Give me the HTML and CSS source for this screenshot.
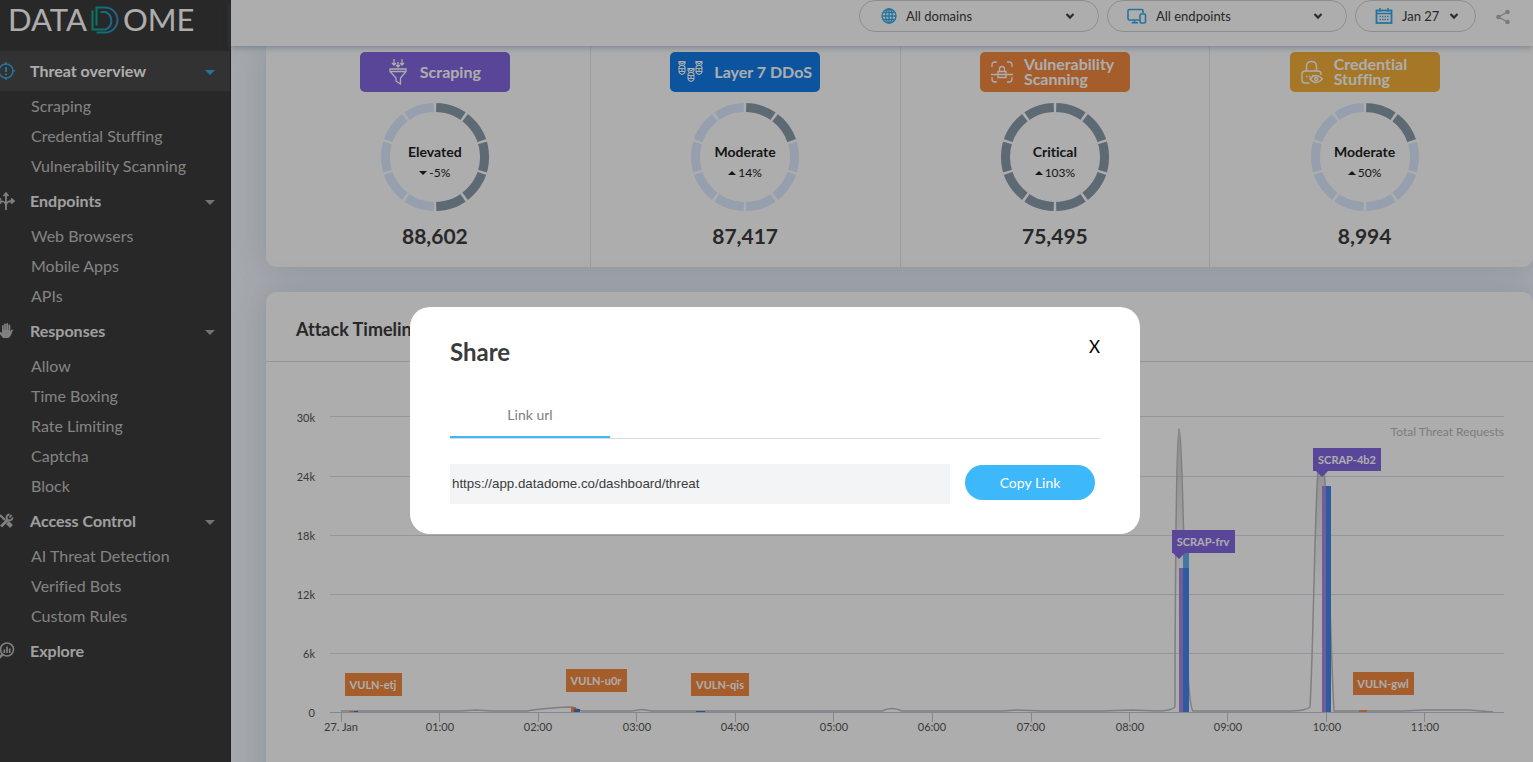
FILE: index.html
```html
<!DOCTYPE html>
<html lang="en">
<head>
<meta charset="utf-8">
<title>DataDome – Threat overview</title>
<link rel="stylesheet" href="styles.css">
</head>
<body>
<svg class="defs" aria-hidden="true">
  <defs>
    <g id="ring-base"><circle cx="55" cy="55" r="49.5" pathLength="100" fill="none" stroke="#deebff" stroke-width="9"/></g>
    <g id="ring-gaps"><circle cx="55" cy="55" r="49.5" pathLength="100" fill="none" stroke="#fff" stroke-width="10" stroke-dasharray="0.8 9.2" stroke-dashoffset="0.4"/></g>
    <symbol id="chevron" viewBox="0 0 10 8"><path d="M1.500 2 5 5.600 8.500 2" fill="none" stroke="#444" stroke-width="2.200"/></symbol>
    <symbol id="bomb" viewBox="0 0 8 14"><path d="M1 .5h6v2L5.500 4.500h-3L1 2.500zM1 .5l3 2.500 3-2.500M1 6l1.500-1.500h3L7 6v4.500q0 2-3 3-3-1-3-3zM1 7.500h6M1 10.500h6M4 7.500v3" fill="none" stroke="#fff" stroke-width="1.100"/></symbol>
  </defs>
</svg>
<div class="app">
  <aside class="sidebar">
    <div class="logo" aria-label="DataDome">
      <span>DATA</span>
      <svg width="28" height="28" viewBox="0 0 28 28" fill="none" stroke-width="2">
        <defs><linearGradient id="lg" gradientUnits="userSpaceOnUse" x1="0" x2="28" y1="0" y2="0"><stop offset=".2" stop-color="#06b09c"/><stop offset=".75" stop-color="#2f96c8"/></linearGradient></defs>
        <path d="M1.500 4.500v19H14.500a9.500 9.500 0 0 0 0-17.500H9.500" stroke="url(#lg)"/>
        <path d="M5.500 19.500V1.500H14a12.500 12.500 0 0 1 0 25H5.500" stroke="url(#lg)"/>
      </svg>
      <span>OME</span>
    </div>
    <nav>
      <a class="section active" href="#"><svg class="nav-icon" viewBox="0 0 18 18" fill="none" stroke="currentColor" stroke-width="1.500"><circle cx="9" cy="9" r="7"/><path d="M9 0v3M9 15v3M0 9h3M15 9h3"/><path d="M9 5v5M9 11.500v1.800" stroke-width="2"/></svg><span>Threat overview</span><i class="caret"></i></a>
      <a class="item" href="#">Scraping</a>
      <a class="item" href="#">Credential Stuffing</a>
      <a class="item" href="#">Vulnerability Scanning</a>
      <a class="section" href="#"><svg class="nav-icon" viewBox="0 0 18 18" fill="none" stroke="currentColor" stroke-width="1.800"><path d="M9 18V2M6.500 4 9 1.200 11.500 4M9 14c0-4-2-5-7-5M9 14c0-4 2-5 7-5M4 6.500 1.200 9 4 11.500M14 6.500 16.800 9 14 11.500"/></svg><span>Endpoints</span><i class="caret"></i></a>
      <a class="item" href="#">Web Browsers</a>
      <a class="item" href="#">Mobile Apps</a>
      <a class="item" href="#">APIs</a>
      <a class="section" href="#"><svg class="nav-icon" viewBox="0 0 18 18" fill="currentColor"><path d="M6 16 2.500 11.500q-1-2 .8-1.800L5 11V4q0-1 .8-1t.9 1v4h.4V2.500q0-1 .9-1t.9 1V8h.4V2q0-1 .9-1t.9 1v6h.4V3.500q0-1 .9-1t.9 1v6l1.200-1.700q1-.8 1.500.2L14 13q-1 3-3 3z"/></svg><span>Responses</span><i class="caret"></i></a>
      <a class="item" href="#">Allow</a>
      <a class="item" href="#">Time Boxing</a>
      <a class="item" href="#">Rate Limiting</a>
      <a class="item" href="#">Captcha</a>
      <a class="item" href="#">Block</a>
      <a class="section" href="#"><svg class="nav-icon" viewBox="0 0 18 18" fill="none" stroke="currentColor"><path d="m3 3 5 5" stroke-width="2.200"/><path d="m10.500 10.500 4 4" stroke-width="4"/><path d="m4 14.500 7-7" stroke-width="3"/><path d="M14.500 3 12.500 5.500M15.500 5.500A3 3 0 1 1 12.500 2.500" stroke-width="1.900"/></svg><span>Access Control</span><i class="caret"></i></a>
      <a class="item" href="#">AI Threat Detection</a>
      <a class="item" href="#">Verified Bots</a>
      <a class="item" href="#">Custom Rules</a>
      <a class="section" href="#"><svg class="nav-icon" viewBox="0 0 18 18" fill="none" stroke="currentColor" stroke-width="1.600"><circle cx="10" cy="7.500" r="6.500"/><path d="m5.500 12.500-4 4" stroke-width="2.500"/><path d="M7.300 7.500V11M10 4.500V11M12.700 6.500V11" stroke-width="1.700"/></svg><span>Explore</span></a>
    </nav>
  </aside>

  <main class="main">
    <header class="topbar">
      <label class="pill wide">
        <svg width="16" height="16" viewBox="0 0 16 16" fill="none" stroke="#39a9e6" stroke-width="1.300"><circle cx="8" cy="8" r="7"/><ellipse cx="8" cy="8" rx="3.300" ry="7"/><path d="M8 1v14M1 8h14M2 4.500h12M2 11.500h12"/></svg>
        <select aria-label="Domains"><option>All domains</option></select>
        <svg width="10" height="8"><use href="#chevron"/></svg>
      </label>
      <label class="pill wide endpoints">
        <svg width="20" height="16" viewBox="0 0 20 16" fill="none" stroke="#39a9e6" stroke-width="1.600"><path d="M12 12H2.500q-1.500 0-1.500-1.500V3q0-1.500 1.500-1.500h12Q16 1.500 16 3v2M7.500 12v2.800M4.500 14.800H11"/><rect x="13" y="6" width="5.500" height="9" rx="1.200"/></svg>
        <select aria-label="Endpoints"><option>All endpoints</option></select>
        <svg width="10" height="8"><use href="#chevron"/></svg>
      </label>
      <button class="pill date" type="button">
        <svg width="18" height="16" viewBox="0 0 18 16" fill="none" stroke="#39a9e6"><rect x="1.500" y="2.500" width="15" height="12.500" stroke-width="1.800"/><path d="M2 5.500h14M5 0v4M13 0v4" stroke-width="1.400"/><path d="M4.500 8.500h9M4.500 11.500h9" stroke-width="1.500" stroke-dasharray="1.500 1"/></svg>
        <span>Jan 27</span>
        <svg width="10" height="8"><use href="#chevron"/></svg>
      </button>
      <button class="share-btn" type="button" aria-label="Share">
        <svg width="14" height="16" viewBox="0 0 14 16"><path d="M11.500 3 2.500 8l9 5" fill="none" stroke="#b4b5bd" stroke-width="1.300"/><g fill="#b4b5bd"><circle cx="11.500" cy="3" r="2.300"/><circle cx="2.500" cy="8" r="2.300"/><circle cx="11.500" cy="13" r="2.300"/></g></svg>
      </button>
    </header>

    <div class="content">
      <section class="card threats">
        <article class="threat">
          <div class="badge purple"><svg width="18" height="26" viewBox="0 0 18 26" fill="none" stroke="#fff" stroke-width="1.300"><path d="M1 10h16v2.500L11.500 19v6L7 22v-3L1 12.500zM2 12.500h14M5 0v5.500M3 4l2 2 2-2M13 0v5.500M11 4l2 2 2-2M9 3v5M7.200 6 9 8l1.800-2"/></svg><span>Scraping</span></div>
          <div class="gauge"><svg class="ring" viewBox="0 0 110 110"><g transform="rotate(-90 55 55)"><use href="#ring-base"/><circle cx="55" cy="55" r="49.500" pathLength="100" fill="none" stroke="#8a9cac" stroke-width="9" stroke-dasharray="50 50"/><use href="#ring-gaps"/></g></svg><div class="level"><strong>Elevated</strong><span><i class="tri down"></i>-5%</span></div></div>
          <p class="count">88,602</p>
        </article>
        <article class="threat">
          <div class="badge blue"><svg width="26" height="22" viewBox="0 0 26 22"><use href="#bomb" x="0" y="0" width="8" height="14"/><use href="#bomb" x="9" y="7" width="8" height="14"/><use href="#bomb" x="17" y="0" width="8" height="14"/></svg><span>Layer 7 DDoS</span></div>
          <div class="gauge"><svg class="ring" viewBox="0 0 110 110"><g transform="rotate(-90 55 55)"><use href="#ring-base"/><circle cx="55" cy="55" r="49.500" pathLength="100" fill="none" stroke="#8a9cac" stroke-width="9" stroke-dasharray="20 80"/><use href="#ring-gaps"/></g></svg><div class="level"><strong>Moderate</strong><span><i class="tri up"></i>14%</span></div></div>
          <p class="count">87,417</p>
        </article>
        <article class="threat">
          <div class="badge orange two"><svg width="22" height="22" viewBox="0 0 22 22" fill="none" stroke="#fff" stroke-width="1.300"><path d="M1 6V4q0-3 3-3h2M16 1h2q3 0 3 3v2M1 16v2q0 3 3 3h2M16 21h2q3 0 3-3v-2M0 13.500h22M7 10.500h8v6H7zM8.500 10.500v-2.500Q8.500 5.500 11 5.500T13.500 8v2.500"/></svg><span>Vulnerability Scanning</span></div>
          <div class="gauge"><svg class="ring" viewBox="0 0 110 110"><g transform="rotate(-90 55 55)"><use href="#ring-base"/><circle cx="55" cy="55" r="49.500" pathLength="100" fill="none" stroke="#8a9cac" stroke-width="9"/><use href="#ring-gaps"/></g></svg><div class="level"><strong>Critical</strong><span><i class="tri up"></i>103%</span></div></div>
          <p class="count">75,495</p>
        </article>
        <article class="threat">
          <div class="badge yellow two"><svg width="22" height="24" viewBox="0 0 22 24" fill="none" stroke="#fff" stroke-width="1.400"><path d="M8.500 23H4q-3 0-3-3v-6q0-3 3-3h13q3 0 3 3v1M5.500 11V6.500q0-5 5-5t5 5V11M9 19q6-7 12.500 0-6.500 7-12.500 0z"/><circle cx="15.200" cy="19" r="1.500"/><path d="M5 16.500h1.500M8 16.500h1.500M11 15.500h1.500"/></svg><span>Credential Stuffing</span></div>
          <div class="gauge"><svg class="ring" viewBox="0 0 110 110"><g transform="rotate(-90 55 55)"><use href="#ring-base"/><circle cx="55" cy="55" r="49.500" pathLength="100" fill="none" stroke="#8a9cac" stroke-width="9" stroke-dasharray="20 80"/><use href="#ring-gaps"/></g></svg><div class="level"><strong>Moderate</strong><span><i class="tri up"></i>50%</span></div></div>
          <p class="count">8,994</p>
        </article>
      </section>

      <section class="card">
        <h2 class="card-title">Attack Timeline</h2>
        <svg class="chart" viewBox="266 362 1267 430" role="img" aria-label="Attack timeline">
          <defs><linearGradient id="fade" x1="0" x2="0" y1="0" y2="1"><stop offset="0" stop-color="#888" stop-opacity=".4"/><stop offset=".6" stop-color="#888" stop-opacity="0"/></linearGradient></defs>
          <path class="grid" d="M330 416.500h1174M330 476.500h1174M330 535.500h1174M330 594.500h1174M330 653.500h1174"/>
          <g class="y-labels"><text x="315" y="422">30k</text><text x="315" y="481">24k</text><text x="315" y="540">18k</text><text x="315" y="599">12k</text><text x="315" y="658">6k</text><text x="315" y="717">0</text></g>
          <text class="series" x="1504" y="436">Total Threat Requests</text>
          <path fill="url(#fade)" d="M1171 707C1175 640 1176 429 1179 429S1183 660 1193 711ZM1310 708C1314 640 1316 450 1321 450S1330 640 1334 711Z"/>
          <path class="line" d="M341 711h120l15-1 15 1h36C537 709 560 707 572 707L582 711h50l10-1.500 10 1.500h230q10-5 20 0h100l15-1 25 1h60l30-1 25 1q14 0 18-4C1175 640 1176 429 1179 429C1182 429 1184 570 1187 650Q1189 706 1193 711h95q18 0 22-4C1314 640 1315 450 1321 450C1327 450 1330 640 1334 711h70l20-1 45 0 24 2"/>
          <g>
            <path fill="#f28d4d" d="M349 711h5v1h-5zM571 707h5v5h-5zM1359 710h8v2h-8z"/>
            <path fill="#3d7ac8" d="M354 711h4v1h-4zM574 709h6v3h-6zM696 711h9v1h-9z"/>
            <path fill="#a78be2" d="M1179 568h4v144h-4zM1322 486h4v226h-4z"/>
            <path fill="#62aff0" d="M1183 545h6v23h-6z"/>
            <path fill="#4587ea" d="M1183 568h6v144h-6zM1326 486h5v226h-5z"/>
          </g>
          <path class="axis" d="M330 712.500h1174M341.500 713v9M439.500 713v9M538.500 713v9M636.500 713v9M735.500 713v9M833.500 713v9M932.500 713v9M1031.500 713v9M1129.500 713v9M1227.500 713v9M1326.500 713v9M1424.500 713v9"/>
          <g class="x-labels"><text x="341" y="731">27. Jan</text><text x="440" y="731">01:00</text><text x="538" y="731">02:00</text><text x="637" y="731">03:00</text><text x="735" y="731">04:00</text><text x="834" y="731">05:00</text><text x="932" y="731">06:00</text><text x="1031" y="731">07:00</text><text x="1130" y="731">08:00</text><text x="1228" y="731">09:00</text><text x="1327" y="731">10:00</text><text x="1425" y="731">11:00</text></g>
          <path fill="#f48a42" d="M345 673h57v23h-57zM566 669h61v23h-61zM691 673h58v23h-58zM1353 672h61v23h-61z"/>
          <path fill="#8467e1" d="M1172 530h63v23h-50l-6 6-6-6h-1zM1313 448h68v23h-53l-6 6-6-6h-3z"/>
          <g class="flags"><text x="373" y="689">VULN-etj</text><text x="596" y="685">VULN-u0r</text><text x="720" y="689">VULN-qis</text><text x="1383" y="688">VULN-gwl</text><text x="1203" y="546">SCRAP-frv</text><text x="1347" y="464">SCRAP-4b2</text></g>
        </svg>
      </section>
    </div>
  </main>
</div>

<div class="overlay">
  <div class="modal" role="dialog" aria-modal="true" aria-labelledby="share-title">
    <div class="modal-head">
      <h1 id="share-title">Share</h1>
      <button class="close" type="button">X</button>
    </div>
    <div class="tabs" role="tablist"><button class="tab" type="button" role="tab" aria-selected="true">Link url</button></div>
    <div class="link-row">
      <input type="text" aria-label="Link url" value="https://app.datadome.co/dashboard/threat">
      <button class="copy" type="button">Copy Link</button>
    </div>
  </div>
</div>
</body>
</html>
```
FILE: styles.css
```css
* { box-sizing: border-box; }
body {
  margin: 0;
  height: 100vh;
  overflow: hidden;
  background: #f3f8ff;
  color: #3b3b3b;
  font-family: Lato, sans-serif;
  font-variant-ligatures: none;
}
button, select { font: inherit; color: inherit; }
button { cursor: pointer; }
.defs { position: absolute; width: 0; height: 0; }
.app { display: flex; height: 100%; }

/* Sidebar */
.sidebar {
  flex: 0 0 231px;
  background: #3b3b3b;
  border-right: 1px solid #2e2e2e;
  overflow: hidden;
}
.logo {
  display: flex;
  align-items: center;
  gap: 4px;
  height: 51px;
  padding: 0 0 12px 8px;
  color: #fff;
  font-size: 31px;
  line-height: 36px;
}
.logo span { padding-bottom: 2px; }
.section, .item {
  display: flex;
  align-items: center;
  text-decoration: none;
}
.section {
  height: 40px;
  padding-right: 15px;
  color: #ececec;
  font-size: 16px;
  font-weight: 700;
}
.section span { flex: 1; padding-bottom: 2px; }
.section.active { background: #4b4b4b; color: #fff; }
.nav-icon {
  flex: none;
  width: 18px;
  height: 18px;
  margin: 0 15px 0 -3px;
  color: #bdbdbd;
}
.item {
  height: 30px;
  padding: 0 0 2px 31px;
  color: #c2c2c2;
  font-size: 16px;
}
.caret {
  margin-top: 2px;
  border: 5px solid transparent;
  border-top-color: #aaa;
  border-bottom: 0;
}
.active .nav-icon { color: #39a9e6; }
.active .caret { border-top-color: #39a9e6; }

/* Top bar */
.main {
  flex: 1;
  min-width: 0;
  display: flex;
  flex-direction: column;
}
.topbar {
  position: relative;
  z-index: 1;
  flex: none;
  display: flex;
  align-items: flex-start;
  justify-content: flex-end;
  gap: 8px;
  height: 46px;
  padding-right: 23px;
  background: #fff;
  box-shadow: 0 2px 6px rgba(120, 145, 175, .5);
}
.pill {
  display: flex;
  align-items: center;
  height: 32px;
  padding: 0 23px 0 21px;
  border: 1px solid #d2d2d6;
  border-radius: 16px;
  background: #fff;
  font-size: 13px;
}
.pill > :nth-child(2) { flex: 1; margin-left: 9px; text-align: left; }
.wide { width: 240px; }
.endpoints { padding-left: 19px; }
.date { width: 121px; padding: 0 16px 0 19px; }
.pill select {
  appearance: none;
  min-width: 0;
  padding: 0;
  border: 0;
  background: none;
}
.share-btn {
  display: flex;
  align-items: center;
  height: 34px;
  margin-left: 12px;
  padding: 0;
  border: 0;
  background: none;
}

/* Cards */
.content {
  flex: 1;
  min-height: 0;
  display: flex;
  flex-direction: column;
  gap: 25px;
  padding-left: 35px;
}
.card {
  flex: none;
  border-radius: 10px;
  background: #fff;
  box-shadow: 0 0 30px rgba(140, 160, 180, .35);
}
.threats {
  display: grid;
  grid-template-columns: repeat(4, 1fr);
  padding: 0 14px;
  border-top-left-radius: 0;
  border-top-right-radius: 0;
}
.threat {
  display: flex;
  flex-direction: column;
  align-items: center;
  padding: 6px 0 17px;
}
.threat + .threat { border-left: 1px solid #e4e6ea; }
.badge {
  display: flex;
  align-items: center;
  justify-content: center;
  gap: 13px;
  width: 150px;
  height: 40px;
  border-radius: 5px;
  color: #fff;
  font-size: 16px;
  font-weight: 700;
  line-height: 15px;
}
.badge svg { flex: none; }
.badge span { padding-bottom: 2px; }
.blue { gap: 10px; }
.two { justify-content: flex-start; gap: 11px; padding-left: 11px; }
.purple { background: #8467e1; }
.blue { background: #147de9; }
.orange { background: #f48a42; }
.yellow { background: #f4b038; }
.gauge {
  display: grid;
  place-items: center;
  width: 110px;
  height: 110px;
  margin-top: 10px;
}
.ring, .level { grid-area: 1 / 1; }
.ring { width: 110px; height: 110px; }
.level {
  display: flex;
  flex-direction: column;
  align-items: center;
  gap: 4px;
  padding-top: 10px;
  font-size: 12px;
  line-height: 17px;
  color: #222;
}
.level strong { font-size: 14px; }
.level span { display: flex; align-items: center; gap: 2px; }
.tri { border: 4px solid transparent; }
.tri.down { border-top-color: #222; border-bottom: 0; }
.tri.up { border-bottom-color: #222; border-top: 0; }
.count {
  margin: 10px 0 0;
  font-size: 21px;
  font-weight: 700;
  line-height: 28px;
}
.card-title {
  margin: 0;
  padding: 25px 30px 20px;
  border-bottom: 1px solid #dadce0;
  font-size: 18px;
  line-height: 24px;
}

/* Chart */
.chart { display: block; width: 100%; height: auto; font-size: 11px; fill: #555; }
.chart .grid { stroke: #dcdee6; fill: none; }
.chart .axis { stroke: #c0c8dc; fill: none; }
.chart .line { stroke: #bcbcbc; stroke-width: 1.5; fill: none; }
.chart .y-labels { text-anchor: end; }
.chart .x-labels { text-anchor: middle; }
.chart .series { text-anchor: end; font-size: 12px; fill: #b8b8b8; }
.chart .flags { text-anchor: middle; font-weight: 700; fill: #fff; }

/* Share dialog */
.overlay {
  position: fixed;
  inset: 0;
  z-index: 2;
  display: flex;
  align-items: flex-start;
  justify-content: center;
  padding: 307px 0 0 17px;
  background: rgba(0, 0, 0, .32);
}
.modal {
  width: 730px;
  padding: 30px 40px;
  border-radius: 20px;
  background: #fff;
}
.modal-head { display: flex; justify-content: space-between; align-items: flex-start; }
.modal-head h1 { margin: 0; font-size: 24px; line-height: 30px; }
.close { padding: 0; border: 0; background: none; color: #000; font-size: 17px; line-height: 20px; }
.tabs { display: flex; margin-top: 30px; border-bottom: 1px solid #d9dadc; }
.tab {
  width: 160px;
  height: 41px;
  padding: 0 0 5px;
  border: 0;
  border-bottom: 2px solid #3db8fa;
  background: none;
  color: #7d7d7d;
  font-size: 14px;
}
.link-row { display: flex; align-items: flex-start; gap: 15px; margin-top: 25px; }
.link-row input {
  width: 500px;
  height: 40px;
  padding: 0 2px 2px;
  border: 0;
  background: #f3f4f6;
  color: #3b3b3b;
  font-family: "Liberation Sans", Arial, sans-serif;
}
.copy {
  width: 130px;
  height: 35px;
  margin-top: 1px;
  padding: 0;
  border: 0;
  border-radius: 18px;
  background: #3db8fa;
  color: #fff;
  font-size: 14px;
}
```
